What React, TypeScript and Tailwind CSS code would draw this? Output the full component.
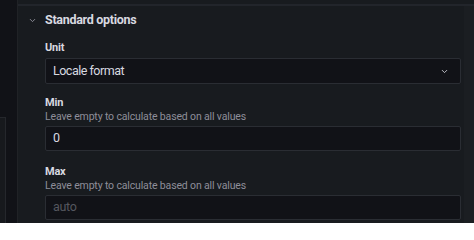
import { ChevronDown } from 'lucide-react'

function Field({ label, description, children }: { label: string; description?: string; children: React.ReactNode }) {
  return (
    <div className="flex flex-col">
      <div className="text-[11px] font-bold leading-[14px] tracking-[-0.2px] text-[#d8d9e0]">{label}</div>
      {description && (
        <div className="text-[10.5px] leading-[14px] tracking-[-0.15px] text-[#8e8e99]">{description}</div>
      )}
      <div className="mt-[2px]">{children}</div>
    </div>
  )
}

export default function App() {
  return (
    <div className="flex h-[223px] w-[474px] overflow-hidden bg-[#181b1f] font-['Roboto',sans-serif]">
      <div className="flex w-[18px] shrink-0 flex-col border-r border-[#202226] bg-[#111217]">
        <div className="h-[117px]" />
        <div className="w-[6px] flex-1 border-t border-r border-[#25272c] bg-[#17191d]" />
      </div>

      <div className="flex flex-1 flex-col">
        <div className="h-[4px]" />
        <div className="h-[2px] bg-[#22252b]" />
        <div className="flex flex-1">
          <div className="flex flex-1 flex-col pr-[3px]">
            <div className="flex h-[29px] items-center">
              <ChevronDown className="ml-[10px] h-[9px] w-[9px] text-[#8e8e99]" strokeWidth={2.5} />
              <span className="ml-[8px] text-[12.5px] font-bold tracking-[-0.3px] text-[#d8d9e0]">
                Standard options
              </span>
            </div>

            <div className="flex flex-col pl-[27px]">
              <div className="mt-[6px]">
                <div className="text-[11px] font-bold leading-[14px] tracking-[-0.2px] text-[#d8d9e0]">Unit</div>
                <div className="mt-[3px] flex h-[26px] items-center justify-between rounded-[2px] border border-[#2a2d33] bg-[#111217] pl-[7px] pr-[11px]">
                  <span className="text-[12.5px] tracking-[-0.5px] text-[#d8d9e0]">Locale format</span>
                  <ChevronDown className="h-[9px] w-[9px] text-[#c8c9d0]" strokeWidth={2.5} />
                </div>
              </div>

              <div className="mt-[12px]">
                <Field label="Min" description="Leave empty to calculate based on all values">
                  <div className="flex h-[25px] items-center rounded-[2px] border border-[#2a2d33] bg-[#111217] pl-[7px]">
                    <span className="text-[12.5px] text-[#d8d9e0]">0</span>
                  </div>
                </Field>
              </div>

              <div className="mt-[14px]">
                <Field label="Max" description="Leave empty to calculate based on all values">
                  <div className="flex h-[25px] items-center rounded-[2px] border border-[#2a2d33] bg-[#111217] pl-[7px]">
                    <span className="text-[12.5px] tracking-[-0.3px] text-[#55575f]">auto</span>
                  </div>
                </Field>
              </div>
            </div>
          </div>
          <div className="w-[10px] shrink-0 bg-[#1b1e22]" />
        </div>
      </div>
    </div>
  )
}
